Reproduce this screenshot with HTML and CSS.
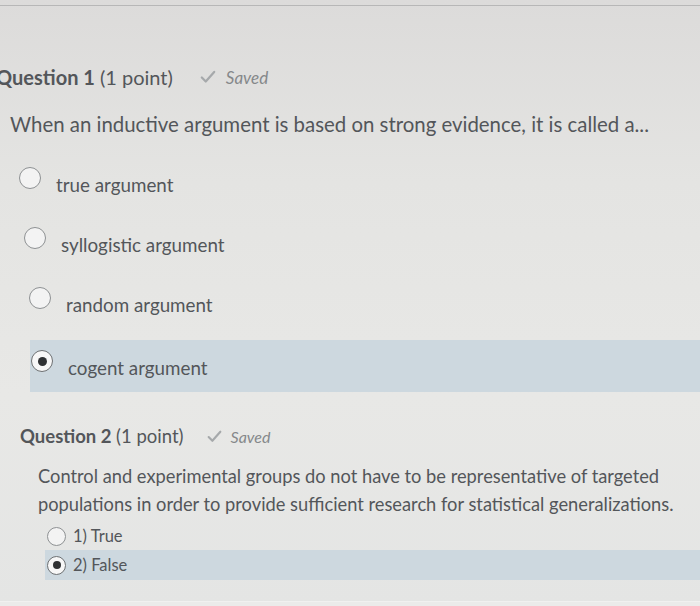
FILE: index.html
```html
<!DOCTYPE html>
<html lang="en">
<head>
<meta charset="utf-8">
<title>Quiz</title>
<link rel="stylesheet" href="styles.css">
</head>
<body>
<div class="topline"></div>

<section class="q q1">
  <h2 class="q-head"><b>Question 1</b> (1 point) <span class="saved"><svg class="check" viewBox="0 0 16 16"><path d="M2.5 8.5 L6 12 L13.5 3.5"/></svg>Saved</span></h2>
  <p class="q-text">When an inductive argument is based on strong evidence, it is called a...</p>
  <div class="opts">
    <div class="opt o1"><span class="radio"></span><span>true argument</span></div>
    <div class="opt o2"><span class="radio"></span><span>syllogistic argument</span></div>
    <div class="opt o3"><span class="radio"></span><span>random argument</span></div>
    <div class="opt o4 sel"><span class="radio on"></span><span>cogent argument</span></div>
  </div>
</section>

<section class="q q2">
  <h2 class="q-head"><b>Question 2</b> (1 point) <span class="saved"><svg class="check" viewBox="0 0 16 16"><path d="M2.5 8.5 L6 12 L13.5 3.5"/></svg>Saved</span></h2>
  <p class="q-text">Control and experimental groups do not have to be representative of targeted populations in order to provide sufficient research for statistical generalizations.</p>
  <div class="opts">
    <div class="opt"><span class="radio"></span><span>1) True</span></div>
    <div class="opt sel"><span class="radio on"></span><span>2) False</span></div>
  </div>
</section>

<div class="bottomline"></div>
</body>
</html>
```

FILE: styles.css
```css
html, body {
  margin: 0;
  padding: 0;
}
body {
  width: 700px;
  height: 606px;
  overflow: hidden;
  font-family: Lato, "Noto Sans", sans-serif;
  color: #53565a;
  background: linear-gradient(180deg, #dcdbda 0%, #e4e4e2 30%, #e8e8e6 65%, #e4e5e4 100%);
}
.topline {
  height: 5px;
  border-bottom: 1px solid #b7b7b7;
}
.q-head {
  margin: 0;
  font-weight: 400;
  display: flex;
  align-items: center;
  white-space: nowrap;
}
.q-head b {
  font-weight: 700;
  margin-right: 0.25em;
}
.saved {
  display: inline-flex;
  align-items: center;
  font-style: italic;
  color: #85888a;
}
.check {
  fill: none;
  stroke: #a6a9ab;
  stroke-width: 2;
  stroke-linecap: round;
  stroke-linejoin: round;
}
.q-text {
  margin: 0;
}
.opts {
  display: flex;
  flex-direction: column;
}
.opt {
  display: flex;
  align-items: center;
}
.radio {
  flex: none;
  box-sizing: border-box;
  border-radius: 50%;
  border: 1.5px solid #8e9193;
  background: #f3f3f3;
  display: flex;
  align-items: center;
  justify-content: center;
}
.radio.on {
  border-color: #6d7072;
  background: #f7f7f7;
}
.radio.on::after {
  content: "";
  border-radius: 50%;
  background: #2f3133;
}

/* Question 1 */
.q1 {
  padding-top: 60px;
}
.q1 .q-head {
  font-size: 20px;
  margin-left: -4px;
  height: 22px;
}
.q1 .saved {
  margin-left: 26px;
  font-size: 17px;
}
.q1 .check {
  width: 18px;
  height: 18px;
  margin-right: 9px;
}
.q1 .q-text {
  font-size: 20.4px;
  margin-top: 24px;
  padding-left: 10px;
  height: 24px;
  line-height: 24px;
}
.q1 .opts {
  margin-top: 17px;
}
.q1 .opt {
  height: 60px;
  font-size: 18.8px;
  gap: 15px;
}
.q1 .opt .radio {
  width: 22px;
  height: 22px;
  margin-top: -10px;
}
.q1 .opt span:last-child {
  padding-top: 2px;
}
.q1 .o1 { padding-left: 19px; }
.q1 .o2 { padding-left: 24px; }
.q1 .o3 { padding-left: 29px; }
.q1 .o4 {
  margin-top: 7px;
  height: 52px;
  margin-left: 30px;
  padding-left: 1px;
}
.q1 .radio.on::after {
  width: 9px;
  height: 9px;
}
.sel {
  background: #cdd8df;
}

/* Question 2 */
.q2 {
  padding-top: 34px;
  padding-left: 20px;
}
.q2 .q-head {
  font-size: 18.5px;
  height: 20px;
}
.q2 .saved {
  margin-left: 22px;
  font-size: 16px;
}
.q2 .check {
  width: 17px;
  height: 17px;
  margin-right: 8px;
}
.q2 .q-text {
  margin-top: 16px;
  padding-left: 18px;
  font-size: 18.3px;
  line-height: 28px;
  width: 660px;
}
.q2 .opts {
  margin-top: 4px;
  padding-left: 25px;
}
.q2 .opt {
  height: 28px;
  font-size: 16.5px;
  gap: 7px;
  padding-left: 2px;
}
.q2 .opt .radio {
  width: 19px;
  height: 19px;
}
.q2 .sel {
  height: 30px;
}
.q2 .radio.on::after {
  width: 8px;
  height: 8px;
}
.bottomline {
  position: absolute;
  left: 0;
  right: 0;
  top: 601px;
  height: 5px;
  border-top: 1px solid #f1f1f0;
  background: #ebebea;
}
```
